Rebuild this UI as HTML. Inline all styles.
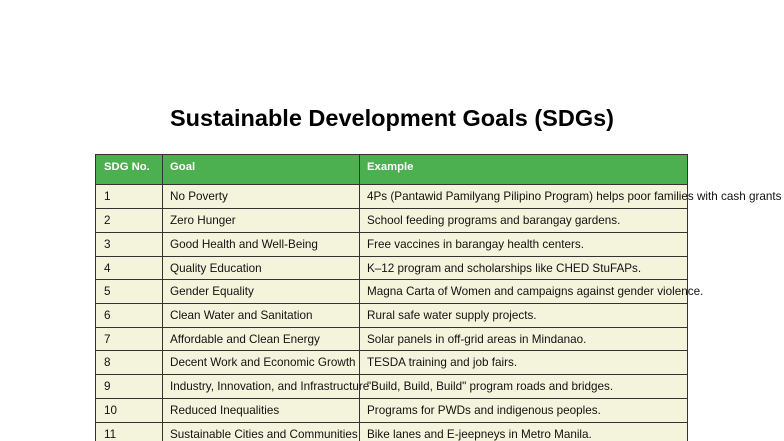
<!DOCTYPE html>
<html><head><meta charset="utf-8"><style>
html,body{margin:0;padding:0;background:#fff;width:784px;height:441px;overflow:hidden;position:relative;font-family:"Liberation Sans",sans-serif;}
.t{position:absolute;left:0;width:784px;top:105px;text-align:center;font-weight:bold;font-size:23.5px;color:#000;}
.row{position:absolute;left:95px;width:593px;box-sizing:border-box;border:1px solid #333;border-top:none;background:#f4f4dc;font-size:11.7px;color:#111;}
.row div{position:absolute;top:0;height:100%;line-height:24px;white-space:nowrap;}
.row .a{left:8px}
.row .b{left:74px}
.row .c{left:271px}
.row .l1,.row .l2{position:absolute;top:0;bottom:0;width:1px;background:#333;}
.l1{left:66px}.l2{left:263px}
.hd{background:#4caf50;border-top:1px solid #333;color:#fff;font-weight:bold;font-size:11.3px}
.hd div{line-height:25px}
</style></head><body>
<div class="t">Sustainable Development Goals (SDGs)</div>
<div class="row hd" style="top:154px;height:31px"><div class="a">SDG No.</div><div class="b">Goal</div><div class="c">Example</div><span class="l1"></span><span class="l2"></span></div>
<div class="row" style="top:185px;height:24px"><div class="a">1</div><div class="b">No Poverty</div><div class="c">4Ps (Pantawid Pamilyang Pilipino Program) helps poor families with cash grants</div><span class="l1"></span><span class="l2"></span></div>
<div class="row" style="top:209px;height:24px"><div class="a">2</div><div class="b">Zero Hunger</div><div class="c">School feeding programs and barangay gardens.</div><span class="l1"></span><span class="l2"></span></div>
<div class="row" style="top:233px;height:24px"><div class="a">3</div><div class="b">Good Health and Well-Being</div><div class="c">Free vaccines in barangay health centers.</div><span class="l1"></span><span class="l2"></span></div>
<div class="row" style="top:257px;height:23px"><div class="a">4</div><div class="b">Quality Education</div><div class="c">K–12 program and scholarships like CHED StuFAPs.</div><span class="l1"></span><span class="l2"></span></div>
<div class="row" style="top:280px;height:24px"><div class="a">5</div><div class="b">Gender Equality</div><div class="c">Magna Carta of Women and campaigns against gender violence.</div><span class="l1"></span><span class="l2"></span></div>
<div class="row" style="top:304px;height:24px"><div class="a">6</div><div class="b">Clean Water and Sanitation</div><div class="c">Rural safe water supply projects.</div><span class="l1"></span><span class="l2"></span></div>
<div class="row" style="top:328px;height:23px"><div class="a">7</div><div class="b">Affordable and Clean Energy</div><div class="c">Solar panels in off-grid areas in Mindanao.</div><span class="l1"></span><span class="l2"></span></div>
<div class="row" style="top:351px;height:24px"><div class="a">8</div><div class="b">Decent Work and Economic Growth</div><div class="c">TESDA training and job fairs.</div><span class="l1"></span><span class="l2"></span></div>
<div class="row" style="top:375px;height:24px"><div class="a">9</div><div class="b">Industry, Innovation, and Infrastructure</div><div class="c">"Build, Build, Build" program roads and bridges.</div><span class="l1"></span><span class="l2"></span></div>
<div class="row" style="top:399px;height:24px"><div class="a">10</div><div class="b">Reduced Inequalities</div><div class="c">Programs for PWDs and indigenous peoples.</div><span class="l1"></span><span class="l2"></span></div>
<div class="row" style="top:423px;height:24px"><div class="a">11</div><div class="b">Sustainable Cities and Communities</div><div class="c">Bike lanes and E-jeepneys in Metro Manila.</div><span class="l1"></span><span class="l2"></span></div>
</body></html>
